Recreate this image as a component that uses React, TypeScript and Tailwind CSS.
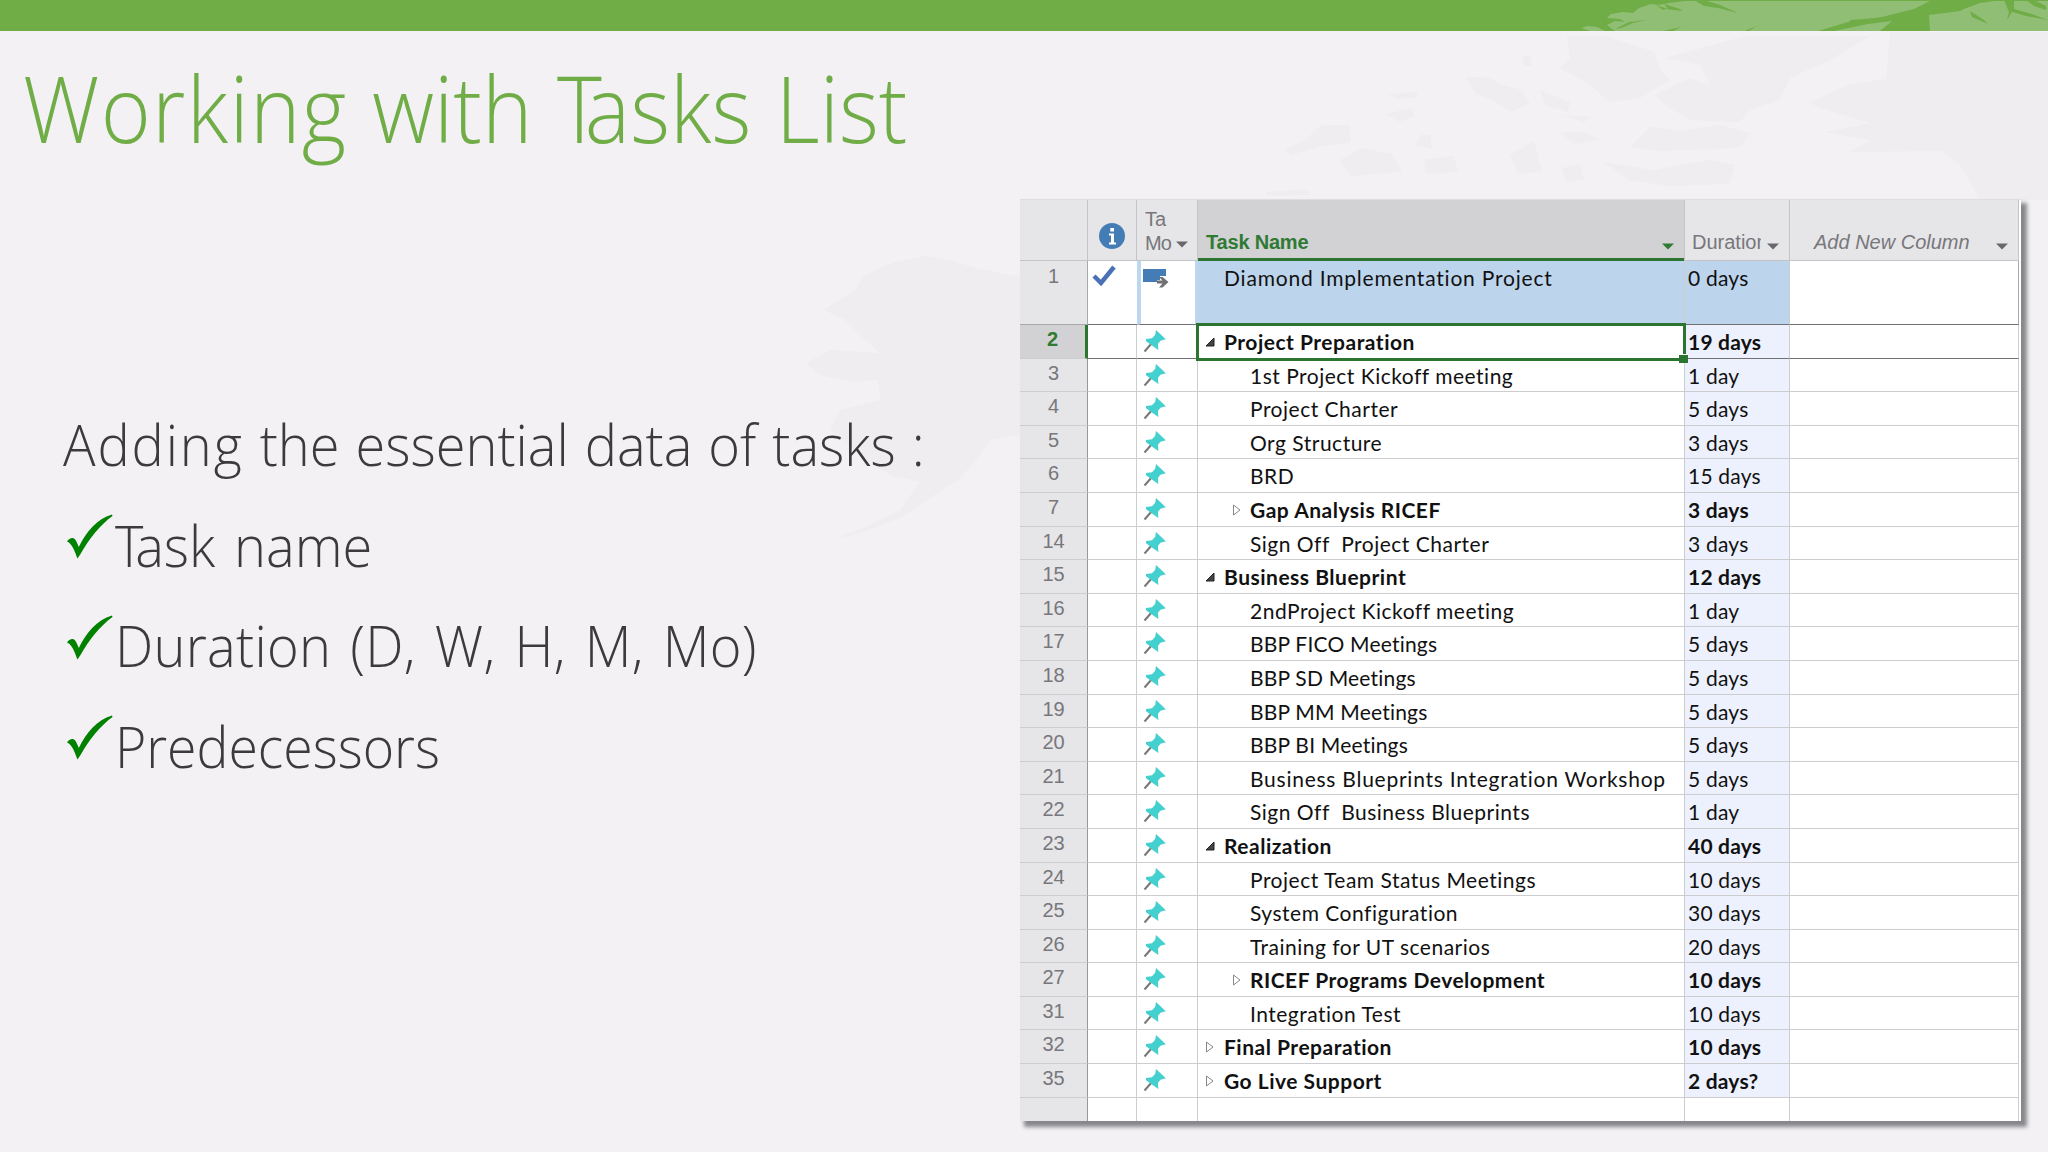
import { Fragment } from 'react'

interface Task {
  id: number
  name: string
  duration: string
  level: number
  state?: 'open' | 'closed'
}

const tasks: Task[] = [
  { id: 2, name: 'Project Preparation', duration: '19 days', level: 0, state: 'open' },
  { id: 3, name: '1st Project Kickoff meeting', duration: '1 day', level: 1 },
  { id: 4, name: 'Project Charter', duration: '5 days', level: 1 },
  { id: 5, name: 'Org Structure', duration: '3 days', level: 1 },
  { id: 6, name: 'BRD', duration: '15 days', level: 1 },
  { id: 7, name: 'Gap Analysis RICEF', duration: '3 days', level: 1, state: 'closed' },
  { id: 14, name: 'Sign Off  Project Charter', duration: '3 days', level: 1 },
  { id: 15, name: 'Business Blueprint', duration: '12 days', level: 0, state: 'open' },
  { id: 16, name: '2ndProject Kickoff meeting', duration: '1 day', level: 1 },
  { id: 17, name: 'BBP FICO Meetings', duration: '5 days', level: 1 },
  { id: 18, name: 'BBP SD Meetings', duration: '5 days', level: 1 },
  { id: 19, name: 'BBP MM Meetings', duration: '5 days', level: 1 },
  { id: 20, name: 'BBP BI Meetings', duration: '5 days', level: 1 },
  { id: 21, name: 'Business Blueprints Integration Workshop', duration: '5 days', level: 1 },
  { id: 22, name: 'Sign Off  Business Blueprints', duration: '1 day', level: 1 },
  { id: 23, name: 'Realization', duration: '40 days', level: 0, state: 'open' },
  { id: 24, name: 'Project Team Status Meetings', duration: '10 days', level: 1 },
  { id: 25, name: 'System Configuration', duration: '30 days', level: 1 },
  { id: 26, name: 'Training for UT scenarios', duration: '20 days', level: 1 },
  { id: 27, name: 'RICEF Programs Development', duration: '10 days', level: 1, state: 'closed' },
  { id: 31, name: 'Integration Test', duration: '10 days', level: 1 },
  { id: 32, name: 'Final Preparation', duration: '10 days', level: 0, state: 'closed' },
  { id: 35, name: 'Go Live Support', duration: '2 days?', level: 0, state: 'closed' },
]

function Caret({ className }: { className: string }) {
  return (
    <svg viewBox="0 0 12 7" className={`w-[12px] h-[7px] shrink-0 ${className}`}>
      <path d="M0 0.5h12L6 6.5z" fill="currentColor" />
    </svg>
  )
}

function Pin() {
  return (
    <svg viewBox="0 0 24 24" className="w-[24px] h-[24px]">
      <path d="M1.500 22.500L9 14" stroke="#777" strokeWidth="2" />
      <path
        d="M13 1l9.800 9.200-5.300 1.600-2.500 3 .3 6.200-5-3.500-7.300-5.300 0-2.200 6-.8 3.200-3.400z"
        fill="#45d0d0"
      />
    </svg>
  )
}

function Toggle({ state }: { state: 'open' | 'closed' }) {
  return (
    <svg viewBox="0 0 10 12" className="w-[10px] h-[12px]">
      {state === 'open' ? (
        <path d="M9 2v8H1z" fill="#444" stroke="#222" />
      ) : (
        <path d="M1.500 1l6.500 5-6.500 5z" fill="#fff" stroke="#888" />
      )}
    </svg>
  )
}

function Check() {
  return (
    <svg viewBox="0 0 46 46" className="w-[46px] h-[46px] shrink-0 mb-[15px]">
      <path
        d="M0 27.500C1.500 25 4 23.500 6 24c2.500 .8 4 4.500 5.800 9C19 18 30 5 45 .5l.5 1.500C33 11 22 25 13.500 40l-3 4.500C8 38.500 5.500 29.500 0 27.500z"
        fill="#008200"
      />
    </svg>
  )
}

// Faint tree silhouettes behind the slide content
function Backdrop() {
  return (
    <svg viewBox="0 0 2048 1152" className="absolute inset-0 w-full h-full">
      <g fill="#efedf0">
        <path d="M824 310l31-20 10-15 30-13 30-6 25 4 25 8 46 9v158l-31 5-10 15-20 24-20 12-22 16-20 12-38 14-30 8 36-14 34-17 20-28-30-7-30-20-30-25 10-20 40-10-2-20-28 2-30-7-14-12 24-13 50 3-20-18-15-15z" />
        <path d="M1567 36h38l50 16 5 18 10 10-30 18-30 4-20-17-30-17 10-10z" />
        <path d="M1665 58l80-22h125l-40 24-40 18-10 22-30 10-10 12-50-2-25-15-10-10 35-17 20 7-10-20z" />
        <path d="M1630 147l20-20 30 4 40-6 30 8-10 14-20 2-60 2zM1603 162l50 8 57-10 25 5-6 19-60 2-40-6z" />
        <path d="M1890 32h158v168h-68l-20-35-20-14-90 1 20-12-45-8 45-9-40-12-22-8 42-19 36-5z" />
        <path d="M1465 77l22 0 15 8 20 5 8 14-20 8-14-10-20-8zM1540 90l30 12-2 10-22-6zM1522 56l8 0 2 10-8 0zM1560 115l32 2-8 5zM1560 133l24-1 16 8-24 4z" />
        <path d="M1285 150l20-10 16-15 28 0 2 18-30 3-30 9zM1388 95l28-4 2 6-20 2zM1384 114l28-6 2 8-14 6zM1340 160l22-12 30 6 10 18-52 4zM1420 135l10 0 2 14-16-4zM1424 160l30-4 4 16-32 2zM1510 155l24-14 8 30-24 4zM1562 168l18-4 4 16-18 2zM1266 192l40-3 6 6-46 1z" />
      </g>
    </svg>
  )
}

function TopBar() {
  return (
    <header className="h-[31px] bg-[#70ad47] flex justify-end">
      <svg viewBox="0 0 468 31" className="w-[468px] h-[31px]">
        <path
          d="M1 28l7-2 9 1 8 4h-15zM35 31l-8-6 8-4 10 1-5-3-13-1 4-4 12-2 10 1 6-5 12-4 8 1 10-2 16-2h373v31z"
          fill="#90be75"
        />
        <g fill="#70ad47">
          <path d="M114 0l10 0 16 5 18 8-20-5-14-2zM76 5l12 4-4-5 16 5 3 2-18-2-2 1zM35 29l14-7 18-2-14 3-12 5zM83 31l18-4-8 4zM165 31l16-7-6 3-6 4z" />
          <path d="M352 0h70l-22 3-16 6-4 2-31 4 1 16h-50l12-10-24 3-34 7-16 0 30-9 34-5 32-8z" />
          <path d="M270 20l26-2 26-2-6 3-20 2-26 1z" />
          <path d="M424 0l10 0 0 9 18 5 16 6-22-4-14-4-5 8 2-8zM446 0h8l12 6 0 4-12-4zM390 11l14 9 4 4-16-7z" />
        </g>
      </svg>
    </header>
  )
}

const cell = 'border-r border-b border-[#cdcdcf]'

function TaskTable() {
  return (
    <div className="w-[1001px] h-[922px] shrink-0 overflow-hidden bg-white font-['Lato',sans-serif] text-[21px] tracking-[0.5px] text-[#111] border-t border-[#dedede]">
      <div className="grid grid-cols-[68px_49px_61px_486px_106px_229px] grid-rows-[61px_64px]">
        <div className="bg-[#e6e5e7] border-r border-b border-[#c4c4c6]" />
        <div className="bg-[#e6e5e7] border-r border-b border-[#c4c4c6] flex justify-center pt-[23px]">
          <svg viewBox="0 0 26 26" className="w-[26px] h-[26px]">
            <circle cx="13" cy="13" r="13" fill="#447db5" />
            <path d="M10 10.500h5v9h2v2h-7v-2h2v-7h-2zM11.300 5h3.700v3.500h-3.700z" fill="#fff" />
          </svg>
        </div>
        <div className="bg-[#e6e5e7] border-r border-b border-[#c4c4c6] pl-[8px] pt-[7px] font-['Liberation_Sans',sans-serif] text-[20px] tracking-normal text-[#77777c] leading-[24px]">
          <div>Ta</div>
          <div className="flex items-center gap-[5px]">
            <span className="tracking-[-1px]">Mo</span>
            <Caret className="text-[#68686c] mt-[3px]" />
          </div>
        </div>
        <div className="bg-[#d2d1d3] border-b-[3px] border-[#2b7530] flex items-end justify-between pl-[8px] pr-[10px] pb-[4px] font-['Liberation_Sans',sans-serif] font-bold text-[20px] text-[#2f7a34] leading-[24px]">
          <span className="tracking-[-0.2px]">Task Name</span>
          <Caret className="mb-[4px]" />
        </div>
        <div className="bg-[#e6e5e7] border-x border-b border-[#c4c4c6] flex items-end pl-[7px] pb-[6px] font-['Liberation_Sans',sans-serif] text-[20px] tracking-normal text-[#77777c] leading-[24px]">
          <span className="w-[69px] overflow-hidden">Duration</span>
          <Caret className="text-[#68686c] ml-[6px] mb-[4px]" />
        </div>
        <div className="bg-[#e6e5e7] border-r border-b border-[#c4c4c6] flex items-end justify-between pl-[24px] pr-[10px] pb-[6px] font-['Liberation_Sans',sans-serif] italic text-[20px] tracking-normal text-[#77777c] leading-[24px]">
          <span>Add New Column</span>
          <Caret className="text-[#68686c] mb-[4px]" />
        </div>

        <div className="bg-[#e6e5e7] border-r border-b border-[#a9a9ac] text-center pt-[3px] font-['Liberation_Sans',sans-serif] text-[20px] tracking-normal text-[#77777c] leading-[24px]">1</div>
        <div className="border-b border-[#6f6f74] pt-[4px] pl-[4px]">
          <svg viewBox="0 0 24 22" className="w-[24px] h-[22px]">
            <path d="M2 11l7 7L22 2" fill="none" stroke="#4a70b8" strokeWidth="4.500" />
          </svg>
        </div>
        <div className="border-b border-b-[#6f6f74] border-l-[4px] border-l-[#bdd7ee] border-r-[3px] border-r-[#bdd7ee] pt-[8px] pl-[2px]">
          <svg viewBox="0 0 26 19" className="w-[26px] h-[19px]">
            <path d="M0 0h23v7h-6v4h-3v2H0z" fill="#447db5" />
            <path d="M14 11.500h5.500L16 8h3.500l6 5-6 5.500H16l3.500-4H14z" fill="#707072" />
          </svg>
        </div>
        <div className="bg-[#bdd5ec] border-b border-[#6f6f74] pl-[26px] pt-[5px] leading-[24px] tracking-[0.8px]">Diamond Implementation Project</div>
        <div className="bg-[#bdd5ec] border-b border-b-[#6f6f74] border-x border-x-[#cdcdcf] pl-[3px] pt-[5px] leading-[24px] tracking-[0.2px]">0 days</div>
        <div className="border-b border-r border-b-[#6f6f74] border-r-[#a9a9ac]" />
      </div>

      <div className="grid grid-cols-[68px_49px_61px_486px_106px_229px] auto-rows-[33.600px]">
        {tasks.map(task => {
          const active = task.id === 2
          const line = active ? 'border-b-[#6f6f74]' : ''
          return (
            <Fragment key={task.id}>
              <div
                className={`border-b border-b-[#cdcdcf] text-center font-['Liberation_Sans',sans-serif] text-[20px] tracking-normal leading-[29px] ${
                  active
                    ? 'bg-[#d2d1d3] border-r-[3px] border-r-[#2b7530] text-[#2f7a34] font-bold'
                    : 'bg-[#e6e5e7] border-r border-r-[#98989b] text-[#77777c]'
                }`}
              >
                {task.id}
              </div>
              <div className={`${cell} ${line}`} />
              <div className={`${cell} ${line} pl-[6px] pt-[4px]`}>
                <Pin />
              </div>
              <div
                className={`relative whitespace-pre leading-[33px] ${
                  active ? 'outline-[3px] outline-[#2b7530] -outline-offset-1' : 'border-b border-[#cdcdcf]'
                } ${task.level ? 'pl-[52px]' : 'pl-[26px]'} ${task.state ? 'font-bold' : ''} ${
                  task.name.startsWith('BBP') ? 'tracking-[0.2px]' : task.name.length > 30 ? 'tracking-[0.75px]' : ''
                }`}
              >
                {task.state && (
                  <span className={`absolute top-[11px] flex ${task.level ? 'left-[34px]' : 'left-[7px]'}`}>
                    <Toggle state={task.state} />
                  </span>
                )}
                {task.name}
                {active && <span className="absolute z-10 -right-[4px] -bottom-[4px] w-[9px] h-[9px] bg-[#2b7530] border-t border-white" />}
              </div>
              <div
                className={`${cell} border-l ${line} bg-[#edf1fd] pl-[3px] leading-[33px] tracking-[0.2px] ${task.state ? 'font-bold' : ''}`}
              >
                {task.duration}
              </div>
              <div className={`${cell} ${line}`} />
            </Fragment>
          )
        })}
        <div className="bg-[#e6e5e7] border-r border-[#98989b]" />
        <div className="border-r border-[#cdcdcf]" />
        <div className="border-r border-[#cdcdcf]" />
        <div />
        <div className="border-x border-[#cdcdcf]" />
        <div className="border-r border-[#cdcdcf]" />
      </div>
    </div>
  )
}

export default function App() {
  return (
    <div className="relative w-[2048px] h-[1152px] overflow-hidden bg-[#f3f1f4]">
      <Backdrop />
      <div className="relative">
        <TopBar />
        <main className="flex justify-between pr-[27px]">
          <section className="w-[990px] font-['Open_Sans',sans-serif] font-light whitespace-nowrap">
            <h1 className="ml-[23px] pt-[17px] text-[92px] leading-[120px] text-[#70ad47] origin-left scale-x-[0.93] [word-spacing:2.5px]">
              <span className="tracking-[1.4px]">Working</span> with <span className="tracking-[-0.2em]">T</span>asks List
            </h1>
            <div className="pl-[63px] pt-[226px] text-[57px] leading-[100.500px] text-[#3b3a3d]">
              <p className="origin-left scale-x-[0.95] [word-spacing:2px]">
                <span className="tracking-[2px]">Adding</span> the essential data of tasks :
              </p>
              <ul className="[word-spacing:5px]">
                <li className="flex items-center pl-[4px]">
                  <Check />
                  <span className="pl-[2px] origin-left scale-x-[0.95]">
                    <span className="tracking-[-0.15em]">T</span>ask name
                  </span>
                </li>
                <li className="flex items-center pl-[4px]">
                  <Check />
                  <span className="pl-[2px] origin-left scale-x-[0.95] tracking-[0.3px]">Duration (D, W, H, M, Mo)</span>
                </li>
                <li className="flex items-center pl-[4px]">
                  <Check />
                  <span className="pl-[2px] origin-left scale-x-[0.94]">Predecessors</span>
                </li>
              </ul>
            </div>
          </section>
          <div className="mt-[168px] shadow-[5px_5px_4px_1px_#88888c]">
            <TaskTable />
          </div>
        </main>
      </div>
    </div>
  )
}
